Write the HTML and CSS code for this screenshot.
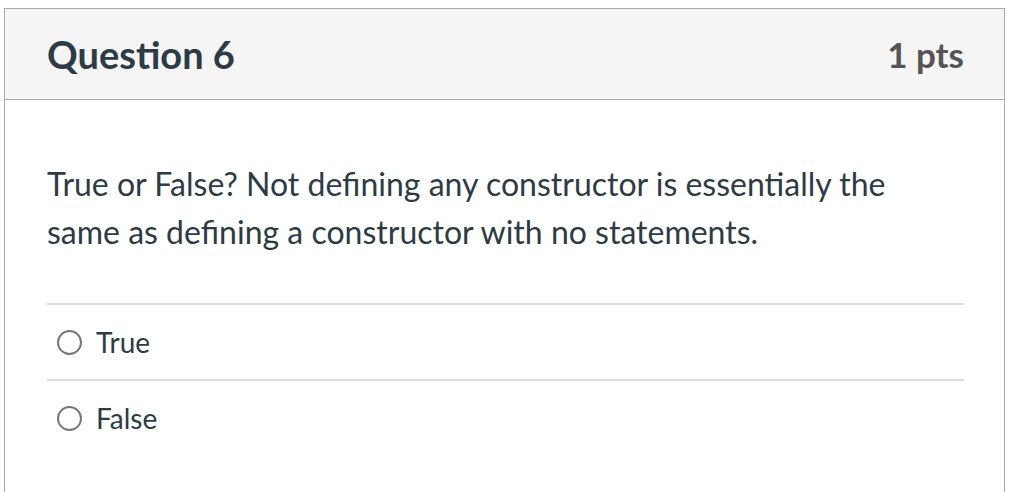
FILE: index.html
```html
<!DOCTYPE html>
<html>
<head>
<meta charset="utf-8">
<link rel="stylesheet" href="styles.css">
</head>
<body>
<div class="card">
  <div class="card-header">
    <h2 class="title">Question 6</h2>
    <span class="points">1 pts</span>
  </div>
  <div class="card-body">
    <p class="question">True or False? Not defining any constructor is essentially the same as defining a constructor with no statements.</p>
    <div class="answers">
      <label class="answer"><span class="radio"></span><span class="answer-text">True</span></label>
      <label class="answer"><span class="radio"></span><span class="answer-text">False</span></label>
    </div>
  </div>
</div>
</body>
</html>
```
FILE: styles.css
```css
html, body {
  margin: 0;
  padding: 0;
  background: #fff;
}
body {
  font-family: Lato, "Noto Sans", sans-serif;
  color: #2d3b45;
  padding: 8px 0 0 4px;
}
.card {
  width: 1001px;
  height: 500px;
  box-sizing: border-box;
  border: 1.5px solid #aaaaaa;
  border-bottom: none;
}
.card-header {
  height: 91px;
  box-sizing: border-box;
  background: #f5f5f5;
  border-bottom: 1.5px solid #aaaaaa;
  display: flex;
  align-items: center;
  justify-content: space-between;
  padding: 0 40px 0 42px;
}
.title {
  margin: 0;
  font-size: 38px;
  font-weight: 700;
  color: #2d3b45;
}
.points {
  font-size: 35px;
  font-weight: 700;
  color: #555555;
}
.card-body {
  padding: 60px 40px 0 42px;
}
.question {
  margin: 0;
  font-size: 32px;
  line-height: 48px;
}
.answers {
  margin-top: 47px;
}
.answer {
  display: flex;
  align-items: center;
  height: 74px;
  border-top: 2px solid #dddddd;
  padding-left: 10px;
}
.radio {
  width: 21px;
  height: 21px;
  border: 2px solid #777777;
  border-radius: 50%;
  margin-right: 14px;
}
.answer-text {
  font-size: 28px;
}
```
